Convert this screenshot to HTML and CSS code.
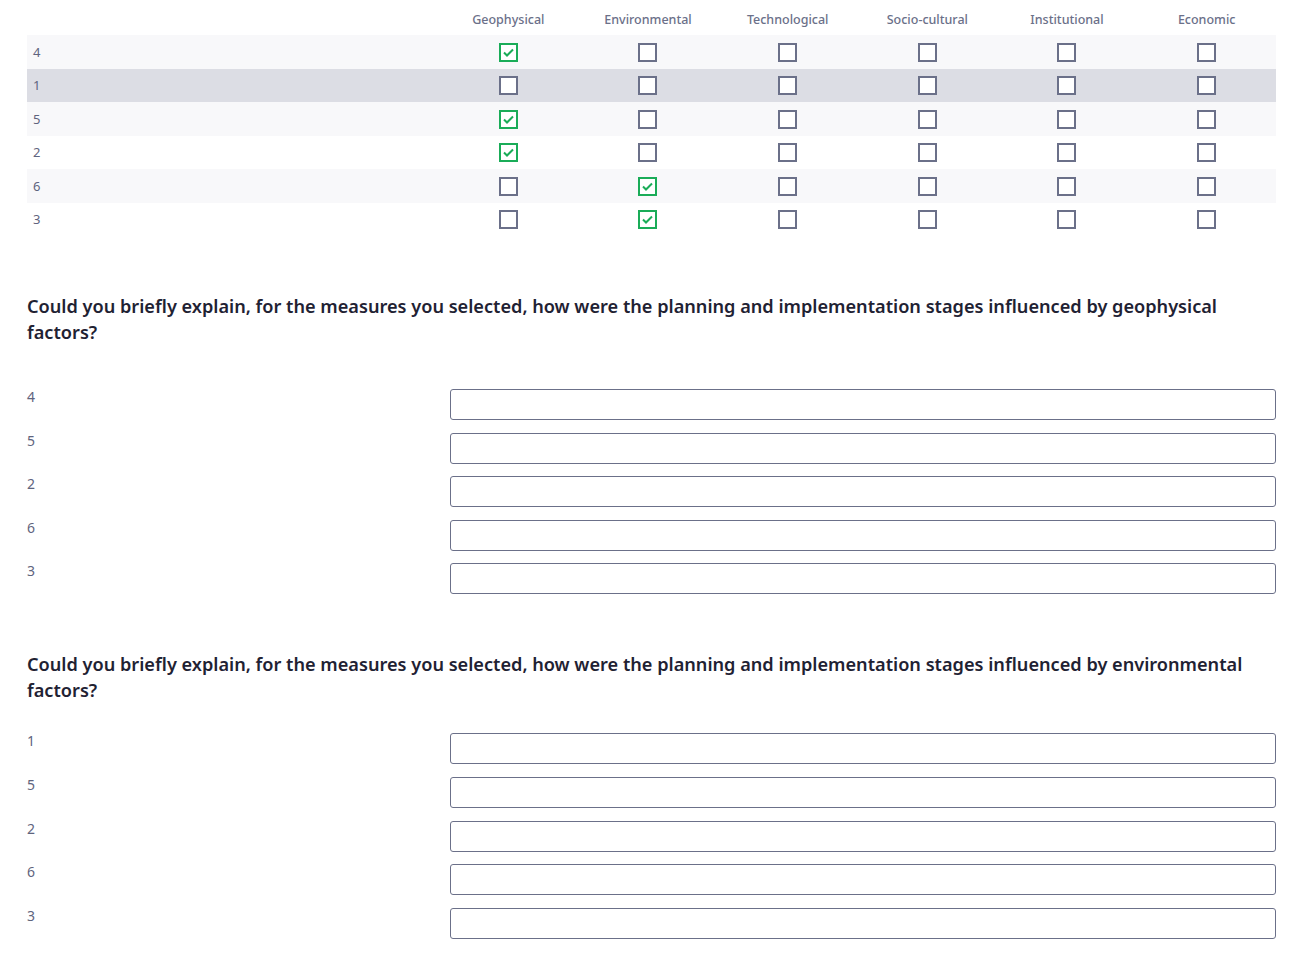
FILE: index.html
```html
<!DOCTYPE html>
<html>
<head>
<meta charset="utf-8">
<link rel="stylesheet" href="styles.css">
</head>
<body>
<div class="page">
  <div class="matrix">
    <div class="mrow head">
      <div class="lbl"></div>
      <div class="col">Geophysical</div>
      <div class="col">Environmental</div>
      <div class="col">Technological</div>
      <div class="col">Socio-cultural</div>
      <div class="col">Institutional</div>
      <div class="col">Economic</div>
    </div>
    <div class="mrow alt">
      <div class="lbl">4</div>
      <div class="col"><span class="cb on"><svg viewBox="0 0 15 15"><path d="M3 7.5 L6 10.5 L12 4.5"/></svg></span></div>
      <div class="col"><span class="cb"></span></div>
      <div class="col"><span class="cb"></span></div>
      <div class="col"><span class="cb"></span></div>
      <div class="col"><span class="cb"></span></div>
      <div class="col"><span class="cb"></span></div>
    </div>
    <div class="mrow hover">
      <div class="lbl">1</div>
      <div class="col"><span class="cb"></span></div>
      <div class="col"><span class="cb"></span></div>
      <div class="col"><span class="cb"></span></div>
      <div class="col"><span class="cb"></span></div>
      <div class="col"><span class="cb"></span></div>
      <div class="col"><span class="cb"></span></div>
    </div>
    <div class="mrow alt">
      <div class="lbl">5</div>
      <div class="col"><span class="cb on"><svg viewBox="0 0 15 15"><path d="M3 7.5 L6 10.5 L12 4.5"/></svg></span></div>
      <div class="col"><span class="cb"></span></div>
      <div class="col"><span class="cb"></span></div>
      <div class="col"><span class="cb"></span></div>
      <div class="col"><span class="cb"></span></div>
      <div class="col"><span class="cb"></span></div>
    </div>
    <div class="mrow">
      <div class="lbl">2</div>
      <div class="col"><span class="cb on"><svg viewBox="0 0 15 15"><path d="M3 7.5 L6 10.5 L12 4.5"/></svg></span></div>
      <div class="col"><span class="cb"></span></div>
      <div class="col"><span class="cb"></span></div>
      <div class="col"><span class="cb"></span></div>
      <div class="col"><span class="cb"></span></div>
      <div class="col"><span class="cb"></span></div>
    </div>
    <div class="mrow alt">
      <div class="lbl">6</div>
      <div class="col"><span class="cb"></span></div>
      <div class="col"><span class="cb on"><svg viewBox="0 0 15 15"><path d="M3 7.5 L6 10.5 L12 4.5"/></svg></span></div>
      <div class="col"><span class="cb"></span></div>
      <div class="col"><span class="cb"></span></div>
      <div class="col"><span class="cb"></span></div>
      <div class="col"><span class="cb"></span></div>
    </div>
    <div class="mrow">
      <div class="lbl">3</div>
      <div class="col"><span class="cb"></span></div>
      <div class="col"><span class="cb on"><svg viewBox="0 0 15 15"><path d="M3 7.5 L6 10.5 L12 4.5"/></svg></span></div>
      <div class="col"><span class="cb"></span></div>
      <div class="col"><span class="cb"></span></div>
      <div class="col"><span class="cb"></span></div>
      <div class="col"><span class="cb"></span></div>
    </div>
  </div>

  <section class="q q1">
    <h2 class="qtitle">Could you briefly explain, for the measures you selected, how were the planning and implementation stages influenced by geophysical factors?</h2>
    <div class="fields">
      <div class="frow"><label class="flabel">4</label><input class="finput" type="text"></div>
      <div class="frow"><label class="flabel">5</label><input class="finput" type="text"></div>
      <div class="frow"><label class="flabel">2</label><input class="finput" type="text"></div>
      <div class="frow"><label class="flabel">6</label><input class="finput" type="text"></div>
      <div class="frow"><label class="flabel">3</label><input class="finput" type="text"></div>
    </div>
  </section>

  <section class="q q2">
    <h2 class="qtitle">Could you briefly explain, for the measures you selected, how were the planning and implementation stages influenced by environmental factors?</h2>
    <div class="fields">
      <div class="frow"><label class="flabel">1</label><input class="finput" type="text"></div>
      <div class="frow"><label class="flabel">5</label><input class="finput" type="text"></div>
      <div class="frow"><label class="flabel">2</label><input class="finput" type="text"></div>
      <div class="frow"><label class="flabel">6</label><input class="finput" type="text"></div>
      <div class="frow"><label class="flabel">3</label><input class="finput" type="text"></div>
    </div>
  </section>
</div>
</body>
</html>
```

FILE: styles.css
```css
html, body {
  margin: 0;
  padding: 0;
  background: #ffffff;
}
body {
  font-family: "Noto Sans", "Open Sans", sans-serif;
  color: #6b7089;
}
.page {
  width: 1249px;
  padding-left: 27px;
}
.matrix {
  display: flex;
  flex-direction: column;
}
.mrow {
  display: grid;
  grid-template-columns: 411px repeat(6, 1fr);
  align-items: center;
  height: 33.5px;
}
.mrow.head {
  height: 35px;
  padding-top: 4px;
  box-sizing: border-box;
}
.mrow.alt { background: #f8f8fa; }
.mrow.hover { background: #dcdde4; }
.head .col {
  font-size: 12.5px;
  font-weight: 500;
  color: #6b7089;
  text-align: center;
  padding-left: 1px;
}
.lbl {
  font-size: 13px;
  padding-left: 6px;
  color: #5f647e;
}
.col {
  display: flex;
  justify-content: center;
  padding-top: 1px;
  padding-left: 1px;
}
.head .col { display: block; padding-top: 0; }
.cb {
  width: 19px;
  height: 19px;
  box-sizing: border-box;
  border: 2px solid #6b7089;
  background: #fff;
  display: flex;
  align-items: center;
  justify-content: center;
}
.cb.on { border-color: #1aac58; }
.cb svg {
  width: 15px;
  height: 15px;
  fill: none;
  stroke: #1aac58;
  stroke-width: 2;
}
.q1 { margin-top: 58px; }
.q2 { margin-top: 58px; }
.qtitle {
  margin: 0;
  font-size: 18.15px;
  font-weight: 600;
  line-height: 25.5px;
  color: #1f2233;
}
.q1 .fields { margin-top: 44px; }
.q2 .fields { margin-top: 30px; }
.frow {
  display: flex;
  align-items: flex-start;
  margin-bottom: 12.6px;
}
.flabel {
  width: 423px;
  font-size: 14px;
  line-height: 15px;
  color: #5f647e;
}
.finput {
  width: 826px;
  height: 31px;
  box-sizing: border-box;
  margin: 0;
  border: 1px solid #6b7089;
  border-radius: 3px;
  padding: 0 8px;
  font: inherit;
  background: #fff;
}
```
